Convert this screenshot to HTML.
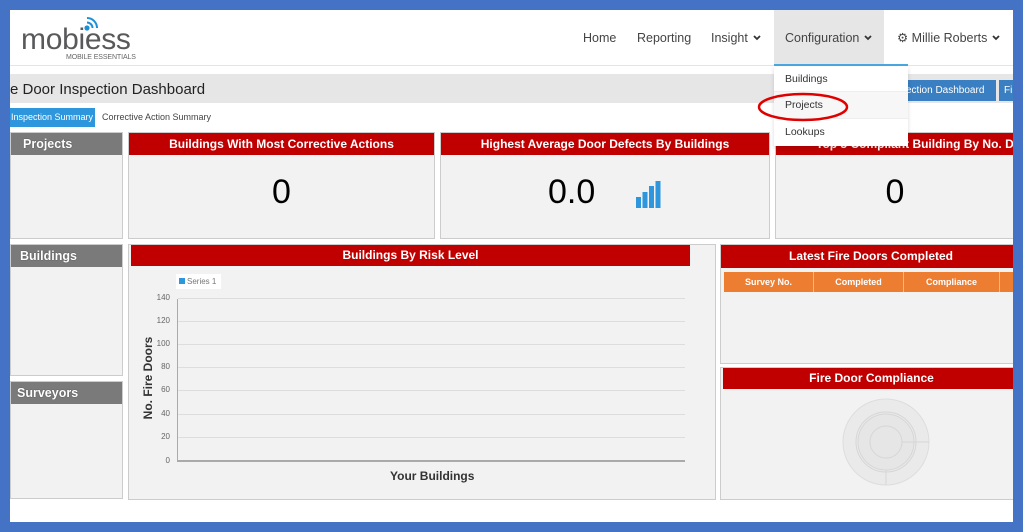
<!DOCTYPE html>
<html><head><meta charset="utf-8"><style>
*{box-sizing:border-box;margin:0;padding:0}
body{width:1023px;height:532px;overflow:hidden;background:#4472c4;font-family:"Liberation Sans",sans-serif;position:relative}
.a{position:absolute}
.in{left:10px;top:10px;width:1003px;height:512px;background:#fff;overflow:hidden}
.nav{font-size:12.5px;color:#444;top:21px;line-height:14px;white-space:nowrap}
.nav svg{margin-left:5px;vertical-align:1px}
.panel{background:#f2f2f2;border:1px solid #ccc}
.gh{background:#7a7a7a;color:#fff;font-weight:bold;font-size:12.5px;height:22px;line-height:22px;padding-left:12px;text-shadow:0 0 1px #333}
.rh{background:#c00000;color:#fff;font-weight:bold;font-size:12px;text-align:center;height:22px;line-height:22px;white-space:nowrap;overflow:hidden}
.big{font-size:34px;color:#000;text-align:center}
.oh{background:#ed7d31;color:#fff;font-weight:bold;font-size:9px;text-align:center;height:20px;line-height:20px;border-right:1px solid #f5b88c}
.yl{font-size:8px;color:#666;width:20px;text-align:right}
.gl{left:168px;width:507px;height:1px;background:#ddd}
</style></head><body>
<div class="a in">
<div class="a" style="left:0;top:55px;width:1003px;height:1px;background:#e4e4e4"></div>
<div class="a" style="left:11px;top:14px;font-size:30px;color:#58595b;letter-spacing:-0.3px;line-height:32px">mobiess</div>
<svg class="a" style="left:72px;top:5px" width="18" height="18" viewBox="0 0 18 18"><circle cx="5" cy="13" r="2.6" fill="#1e90d8"/><path d="M5 7.5a5.5 5.5 0 0 1 5.5 5.5" stroke="#1e90d8" stroke-width="2" fill="none"/><path d="M5 3a10 10 0 0 1 10 10" stroke="#1e90d8" stroke-width="2" fill="none"/></svg>
<div class="a" style="left:56px;top:44px;font-size:7px;color:#666;letter-spacing:-0.1px">MOBILE ESSENTIALS</div>
<div class="a nav" style="left:573px">Home</div>
<div class="a nav" style="left:627px">Reporting</div>
<div class="a nav" style="left:701px">Insight<svg width="8" height="6"><path d="M1 1l3 3 3-3" stroke="#333" stroke-width="1.8" fill="none"/></svg></div>
<div class="a" style="left:764px;top:0;width:110px;height:54px;background:#e6e6e6"></div>
<div class="a" style="left:764px;top:54px;width:134px;height:2px;background:#4aa8e0"></div>
<div class="a nav" style="left:775px">Configuration<svg width="8" height="6"><path d="M1 1l3 3 3-3" stroke="#333" stroke-width="1.8" fill="none"/></svg></div>
<div class="a nav" style="left:887px">&#9881; Millie Roberts<svg width="8" height="6"><path d="M1 1l3 3 3-3" stroke="#333" stroke-width="1.8" fill="none"/></svg></div>
<div class="a" style="left:0;top:64px;width:1003px;height:29px;background:#e6e6e6"></div>
<div class="a" style="left:0;top:71px;font-size:15px;color:#222">e Door Inspection Dashboard</div>
<div class="a" style="left:890px;top:70px;width:96px;height:21px;background:#3a7fc1;color:#fff;font-size:10px;line-height:21px;padding-left:6px;white-space:nowrap;overflow:hidden">ection Dashboard</div>
<div class="a" style="left:989px;top:70px;width:20px;height:21px;background:#3a7fc1;color:#fff;font-size:10px;line-height:21px;padding-left:5px">Fi</div>
<div class="a" style="left:0;top:98px;width:85px;height:19px;background:#2d96dc;color:#fff;font-size:9px;line-height:19px;padding-left:1px;white-space:nowrap">Inspection Summary</div>
<div class="a" style="left:92px;top:98px;font-size:9px;line-height:19px;color:#444">Corrective Action Summary</div>
<div class="a panel" style="left:0;top:122px;width:113px;height:107px"><div class="gh">Projects</div></div>
<div class="a panel" style="left:0;top:234px;width:113px;height:132px"><div class="gh" style="padding-left:9px">Buildings</div></div>
<div class="a panel" style="left:0;top:371px;width:113px;height:118px"><div class="gh" style="padding-left:6px">Surveyors</div></div>
<div class="a panel" style="left:118px;top:122px;width:307px;height:107px"><div class="rh">Buildings With Most Corrective Actions</div><div class="big" style="margin-top:18px">0</div></div>
<div class="a panel" style="left:430px;top:122px;width:330px;height:107px"><div class="rh">Highest Average Door Defects By Buildings</div>
<div class="a big" style="left:107px;top:40px">0.0</div>
<svg class="a" style="left:195px;top:48px" width="26" height="28"><rect x="0" y="16" width="5" height="11" fill="#2d96dc"/><rect x="6.5" y="11" width="5" height="16" fill="#2d96dc"/><rect x="13" y="5" width="5" height="22" fill="#2d96dc"/><rect x="19.5" y="0" width="5" height="27" fill="#2d96dc"/></svg></div>
<div class="a panel" style="left:765px;top:122px;width:250px;height:107px"><div class="rh" style="text-align:left;padding-left:40px">Top 5 Compliant Building By No. Doors</div><div class="big" style="margin-top:18px;width:238px">0</div></div>
<div class="a panel" style="left:118px;top:234px;width:588px;height:256px"></div>
<div class="a rh" style="left:121px;top:235px;width:559px;height:21px;line-height:21px">Buildings By Risk Level</div>
<div class="a" style="left:166px;top:264px;width:45px;height:15px;background:#fff;font-size:8px;color:#777;line-height:15px;padding-left:3px"><span style="display:inline-block;width:6px;height:6px;background:#2d96dc;margin-right:2px"></span>Series 1</div>
<div class="a gl" style="top:288px"></div><div class="a gl" style="top:311px"></div><div class="a gl" style="top:334px"></div><div class="a gl" style="top:357px"></div><div class="a gl" style="top:380px"></div><div class="a gl" style="top:404px"></div><div class="a gl" style="top:427px"></div>
<div class="a" style="left:167px;top:289px;width:1px;height:162px;background:#aaa"></div>
<div class="a" style="left:167px;top:450px;width:508px;height:2px;background:#aaa"></div>
<div class="a yl" style="top:283px;left:140px">140</div><div class="a yl" style="top:306px;left:140px">120</div><div class="a yl" style="top:329px;left:140px">100</div><div class="a yl" style="top:352px;left:140px">80</div><div class="a yl" style="top:375px;left:140px">60</div><div class="a yl" style="top:399px;left:140px">40</div><div class="a yl" style="top:422px;left:140px">20</div><div class="a yl" style="top:446px;left:140px">0</div>
<div class="a" style="left:93px;top:361px;width:90px;transform:rotate(-90deg);font-size:12px;font-weight:bold;color:#333;text-align:center">No. Fire Doors</div>
<div class="a" style="left:380px;top:459px;font-size:12px;font-weight:bold;color:#333">Your Buildings</div>
<div class="a panel" style="left:710px;top:234px;width:300px;height:120px"></div>
<div class="a rh" style="left:711px;top:235px;width:300px;height:23px;line-height:23px">Latest Fire Doors Completed</div>
<div class="a oh" style="left:714px;top:262px;width:90px">Survey No.</div>
<div class="a oh" style="left:804px;top:262px;width:90px">Completed</div>
<div class="a oh" style="left:894px;top:262px;width:96px">Compliance</div>
<div class="a oh" style="left:990px;top:262px;width:20px"></div>
<div class="a panel" style="left:710px;top:357px;width:300px;height:133px"></div>
<div class="a rh" style="left:713px;top:358px;width:297px;height:21px;line-height:21px">Fire Door Compliance</div>
<svg class="a" style="left:832px;top:388px" width="90" height="90" viewBox="0 0 90 90"><circle cx="44" cy="44" r="43" fill="#eaeaea" stroke="#ddd"/><circle cx="44" cy="44" r="30" fill="none" stroke="#d6d6d6"/><circle cx="44" cy="44" r="28" fill="#e6e6e6" stroke="#d6d6d6"/><circle cx="44" cy="44" r="16" fill="#e6e6e6" stroke="#d6d6d6"/><path d="M60 44H87M44 72V87" stroke="#d6d6d6"/></svg>
<div class="a" style="left:764px;top:56px;width:134px;height:80px;background:#fff;box-shadow:0 2px 4px rgba(0,0,0,.15)">
<div style="height:26px;line-height:26px;font-size:10.5px;color:#333;padding-left:11px;border-bottom:1px solid #eee">Buildings</div>
<div style="height:27px;line-height:27px;font-size:10.5px;color:#333;padding-left:11px;border-bottom:1px solid #eee;background:#f7f7f7">Projects</div>
<div style="height:27px;line-height:27px;font-size:10.5px;color:#333;padding-left:11px">Lookups</div>
</div>
<svg class="a" style="left:746px;top:81px" width="96" height="32"><ellipse cx="47" cy="16" rx="44" ry="13" fill="none" stroke="#e00000" stroke-width="2.5"/></svg>
</div>
</body></html>
